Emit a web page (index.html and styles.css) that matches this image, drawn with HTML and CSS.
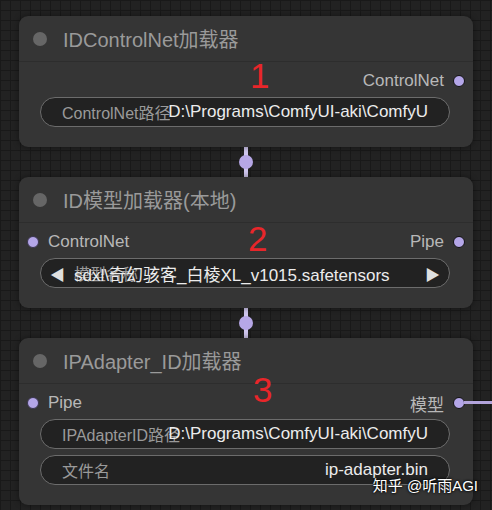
FILE: index.html
```html
<!DOCTYPE html>
<html>
<head>
<meta charset="utf-8">
<link rel="stylesheet" href="styles.css">
</head>
<body>
<div class="canvas">

  <div class="node">
    <div class="node-title"><span class="title-dot"></span>IDControlNet加载器</div>
    <div class="node-body">
      <div class="slots">
        <span class="slot"></span>
        <span class="slot slot-out">ControlNet<span class="slot-dot"></span></span>
      </div>
      <div class="widget">
        <span class="widget-label">ControlNet路径</span>
        <span class="widget-value">D:\Programs\ComfyUI-aki\ComfyU</span>
      </div>
    </div>
    <span class="marker marker-1">1</span>
  </div>

  <div class="link"><span class="link-dot"></span></div>

  <div class="node">
    <div class="node-title"><span class="title-dot"></span>ID模型加载器(本地)</div>
    <div class="node-body">
      <div class="slots">
        <span class="slot slot-in"><span class="slot-dot"></span>ControlNet</span>
        <span class="slot slot-out">Pipe<span class="slot-dot"></span></span>
      </div>
      <div class="widget combo">
        <span class="arrow">◀</span>
        <span class="combo-text">
          <span class="widget-label">模型名称</span>
          <span class="combo-value">sdxl\奇幻骇客_白棱XL_v1015.safetensors</span>
        </span>
        <span class="arrow">▶</span>
      </div>
    </div>
    <span class="marker marker-2">2</span>
  </div>

  <div class="link"><span class="link-dot"></span></div>

  <div class="node">
    <div class="node-title"><span class="title-dot"></span>IPAdapter_ID加载器</div>
    <div class="node-body">
      <div class="slots">
        <span class="slot slot-in"><span class="slot-dot"></span>Pipe</span>
        <span class="slot slot-out">模型<span class="slot-dot linked"></span></span>
      </div>
      <div class="widget">
        <span class="widget-label">IPAdapterID路径</span>
        <span class="widget-value">D:\Programs\ComfyUI-aki\ComfyU</span>
      </div>
      <div class="widget">
        <span class="widget-label">文件名</span>
        <span class="widget-value">ip-adapter.bin</span>
      </div>
    </div>
    <span class="marker marker-3">3</span>
  </div>

  <div class="watermark">知乎 @听雨AGI</div>
</div>
</body>
</html>
```

FILE: styles.css
```css
html, body
{
  margin: 0;
  padding: 0;
  width: 100%;
  height: 100%;
  overflow: hidden;
  font-family: "Liberation Sans", "Noto Sans CJK SC", sans-serif;
}

body
{
  background-color: #222222;
  background-image:
    linear-gradient(to right, #191919 1px, transparent 1px),
    linear-gradient(to bottom, #191919 1px, transparent 1px);
  background-size: 10px 10px;
}

.canvas
{
  position: relative;
  height: 100%;
  box-sizing: border-box;
  padding: 16px 0 0 19px;
}

/* node box */
.node
{
  position: relative;
  width: 454px;
  background-color: #353535;
  border-radius: 9px;
  box-shadow: 0 0 6px rgba(0, 0, 0, 0.45);
}

.node-title
{
  display: flex;
  align-items: center;
  height: 45px;
  padding-left: 14px;
  border-bottom: 1px solid #2d2d2d;
  font-size: 20px;
  color: #9a9a9a;
}

.title-dot
{
  width: 14px;
  height: 14px;
  margin-right: 16px;
  border-radius: 50%;
  background-color: #666666;
}

.node-body
{
  padding: 7px 0 20px 0;
}

.slots
{
  display: flex;
  justify-content: space-between;
  align-items: center;
  height: 24px;
  padding: 0 8px;
  font-size: 17px;
  color: #b8b8b8;
}

.slot
{
  display: flex;
  align-items: center;
  gap: 9px;
}

.slot-dot
{
  position: relative;
  width: 12px;
  height: 12px;
  box-sizing: border-box;
  border-radius: 50%;
  border: 1.5px solid #111;
  background-color: #b4a6e8;
}

.slot-in .slot-dot
{
  border-color: #3a3550;
}

.slot-dot.linked::after
{
  content: "";
  position: absolute;
  left: 10px;
  top: 3px;
  width: 40px;
  height: 3px;
  background-color: #b3a4dc;
}

/* text widgets */
.widget
{
  display: grid;
  align-items: center;
  height: 30px;
  box-sizing: border-box;
  margin: 4px 23px 0 21px;
  padding: 0 21px;
  border: 1px solid #6c6c6c;
  border-radius: 15px;
  background-color: #222222;
  font-size: 17px;
  white-space: nowrap;
}

.widget + .widget
{
  margin-top: 6px;
}

.widget-label
{
  grid-area: 1 / 1;
  justify-self: start;
  font-size: 16px;
  color: #9a9a9a;
}

.widget-value
{
  grid-area: 1 / 1;
  justify-self: end;
  color: #ececec;
}

.combo
{
  grid-template-columns: auto 1fr auto;
  padding: 0 9px;
}

.combo-text
{
  display: grid;
  padding-left: 9px;
}

.combo-text .widget-label,
.combo-value
{
  grid-area: 1 / 1;
}

.combo-value
{
  color: #ececec;
}

.arrow
{
  font-size: 15px;
  color: #e0e0e0;
}

/* link between nodes */
.link
{
  display: flex;
  justify-content: center;
  align-items: center;
  width: 454px;
  height: 30px;
  background: linear-gradient(to right, transparent 225px, #cfc6ee 225px, #cfc6ee 229px, transparent 229px);
}

.link-dot
{
  width: 14px;
  height: 14px;
  border-radius: 50%;
  background-color: #b6a7e6;
}

/* red annotation numbers */
.marker
{
  position: absolute;
  font-size: 35px;
  line-height: 1;
  color: #e8262a;
}

.marker-1
{
  left: 231px;
  top: 42px;
}

.marker-2
{
  left: 229px;
  top: 44px;
}

.marker-3
{
  left: 234px;
  top: 34px;
}

.watermark
{
  position: absolute;
  right: 14px;
  bottom: 15px;
  font-size: 15px;
  color: #ffffff;
  text-shadow: 0 0 3px #000, 0 0 2px #000;
}
```
